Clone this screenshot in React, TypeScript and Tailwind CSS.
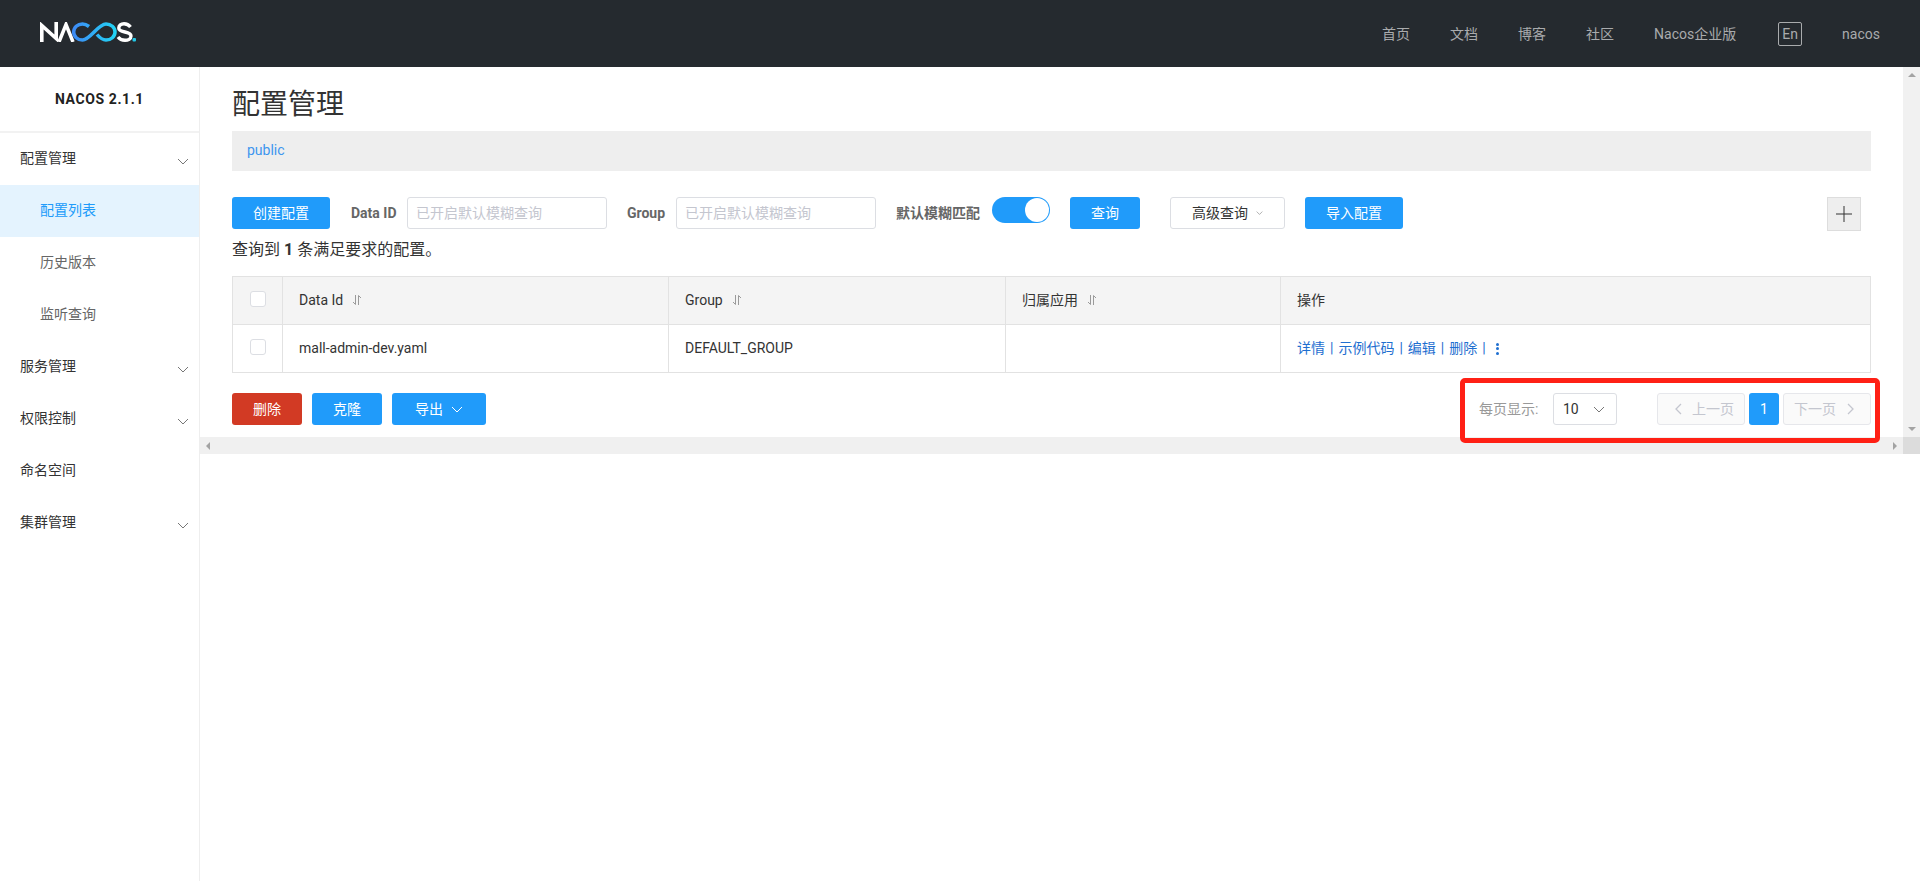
import React from 'react';

const sideMenu = [
  { label: '配置管理', arrow: true },
  { label: '配置列表', sub: true, active: true },
  { label: '历史版本', sub: true },
  { label: '监听查询', sub: true },
  { label: '服务管理', arrow: true },
  { label: '权限控制', arrow: true },
  { label: '命名空间' },
  { label: '集群管理', arrow: true },
];

const navLinks = ['首页', '文档', '博客', '社区'];

function Chevron({ className }: { className?: string }) {
  return (
    <svg viewBox="0 0 12 7" fill="none" stroke="currentColor" strokeWidth="1" className={className}>
      <path d="M1 1l5 5 5-5" />
    </svg>
  );
}

function PageArrow({ d }: { d: string }) {
  return (
    <svg viewBox="0 0 8 12" width="8" height="12" fill="none" stroke="#c4c6cf" strokeWidth="1.300">
      <path d={d} />
    </svg>
  );
}

function SortIcon() {
  return (
    <svg viewBox="0 0 8 10" fill="none" stroke="#9a9a9a" strokeWidth="1" className="ml-[10px] mt-[5px] h-[10px] w-[8px]">
      <path d="M2.500 0v9.500M0 7l2.500 2.500M5.500 10V0.500M5.500 0.500L8 3" />
    </svg>
  );
}

function Logo() {
  return (
    <svg viewBox="0 0 98 20" width="98" height="20" fill="none" className="mb-[3px]">
      <defs>
        <linearGradient id="inf" x1="0" x2="1" y1="0" y2="0">
          <stop offset="0" stopColor="#3d8bf5" />
          <stop offset="1" stopColor="#22d3f5" />
        </linearGradient>
      </defs>
      <path d="M3.800 20V3.500L18.200 16.500V0" stroke="#fff" strokeWidth="3.600" />
      <path d="M21 20L28 2.500 35 20" stroke="#fff" strokeWidth="3.500" />
      <path
        d="M51 4.500C49 3 47 2 44.500 2 39.500 2 35.700 5.500 35.700 10 35.700 14.500 39.500 18 44.500 18 52 18 60 2 68 2 73 2 77 5.500 77 10 77 14.500 73 18 68 18 64.500 18 61.500 15.500 59 12.500"
        stroke="url(#inf)"
        strokeWidth="3.500"
      />
      <path
        d="M92.500 5C91 3 88.500 1.700 86 1.700 83 1.700 80.800 3.500 80.800 6 80.800 11.500 93 8.500 93 14 93 16.800 90 18.300 87 18.300 84 18.300 81.500 17 80 15"
        stroke="#fff"
        strokeWidth="3.400"
      />
      <rect x="94.500" y="16" width="3.500" height="3.500" rx="1" fill="#22c8e8" />
    </svg>
  );
}

function BlueButton({ children, className }: { children: React.ReactNode; className?: string }) {
  return (
    <button className={`flex h-8 items-center justify-center rounded-[3px] bg-[#209bfa] text-sm text-white ${className ?? ''}`}>
      {children}
    </button>
  );
}

function Field({ placeholder }: { placeholder: string }) {
  return (
    <input
      readOnly
      placeholder={placeholder}
      className="h-8 w-[200px] rounded-[3px] border border-[#dcdee3] px-2 text-sm outline-none placeholder:text-[#c4c6cf]"
    />
  );
}

function Checkbox() {
  return <div className="mx-auto h-4 w-4 rounded-[3px] border border-[#dcdee3] bg-white" />;
}

function Sep() {
  return <span className="mx-[5px]">|</span>;
}

export default function App() {
  return (
    <div className="relative flex h-screen flex-col overflow-hidden bg-white font-['Roboto','Noto_Sans_CJK_SC',sans-serif] text-sm text-[#333]">
      <header className="flex h-[67px] shrink-0 items-center justify-between bg-[#252a2f] pl-[38px] pr-[40px] text-[#a9abad]">
        <Logo />
        <nav className="flex items-center gap-10">
          {navLinks.map((link) => (
            <a key={link}>{link}</a>
          ))}
          <a className="w-[84px]">Nacos企业版</a>
          <span className="flex h-6 w-6 items-center justify-center rounded-[2px] border border-[#a9abad]">En</span>
          <a>nacos</a>
        </nav>
      </header>

      <div className="flex min-h-0 flex-1">
        <aside className="w-[200px] shrink-0 border-r border-[#eee]">
          <div className="flex h-[66px] items-center justify-center border-b-2 border-[#f2f2f2] font-bold tracking-[0.6px] text-[#222]">
            NACOS 2.1.1
          </div>
          {sideMenu.map((item) => (
            <div
              key={item.label}
              className={`flex h-[52px] items-center justify-between pb-[2px] pr-[10px] ${item.sub ? 'pl-10' : 'pl-5'} ${
                item.active ? 'bg-[#e4f3fe] text-[#209bfa]' : item.sub ? 'text-[#666]' : ''
              }`}
            >
              <span>{item.label}</span>
              {item.arrow && <Chevron className="mt-[6px] h-[7px] w-[12px] text-[#777]" />}
            </div>
          ))}
        </aside>

        <main className="flex min-w-0 flex-1 flex-col">
          <div className="flex h-[370px]">
            <div className="min-w-0 flex-1 px-8">
              <h1 className="h-16 pt-5 text-[28px] leading-[36px] text-[#333]">配置管理</h1>
              <div className="flex h-10 items-center bg-[#eee] px-[15px] pb-[2px] text-[#3d96ee]">public</div>

              <div className="mt-[26px] flex items-start">
                <BlueButton className="w-[98px]">创建配置</BlueButton>
                <label className="ml-[21px] h-8 w-[56px] font-bold leading-8 text-[#666]">Data ID</label>
                <Field placeholder="已开启默认模糊查询" />
                <label className="ml-5 h-8 w-[49px] font-bold leading-8 text-[#666]">Group</label>
                <Field placeholder="已开启默认模糊查询" />
                <label className="ml-5 h-8 w-[96px] font-bold leading-8 text-[#666]">默认模糊匹配</label>
                <div className="flex h-[26px] w-[58px] items-center justify-end rounded-full bg-[#209bfa] pr-px">
                  <div className="h-6 w-6 rounded-full bg-white" />
                </div>
                <BlueButton className="ml-5 w-[70px]">查询</BlueButton>
                <button className="ml-[30px] flex h-8 w-[115px] items-center justify-center rounded-[3px] border border-[#dcdee3]">
                  高级查询
                  <Chevron className="ml-2 h-[4px] w-[7px] text-[#777]" />
                </button>
                <BlueButton className="ml-5 w-[98px]">导入配置</BlueButton>
                <button className="ml-auto mr-[10px] flex h-[34px] w-[34px] items-center justify-center border border-[#ddd] bg-[#eee]">
                  <svg viewBox="0 0 16 16" width="16" height="16" stroke="#333" strokeWidth="1">
                    <path d="M0 8h16M8 0v16" />
                  </svg>
                </button>
              </div>

              <h5 className="mb-[14px] pt-[7px] text-base leading-6">
                查询到 <strong className="font-bold">1</strong> 条满足要求的配置。
              </h5>

              <table className="w-[1638px] table-fixed border-collapse">
                <colgroup>
                  <col className="w-[50px]" />
                  <col className="w-[386px]" />
                  <col className="w-[337px]" />
                  <col className="w-[275px]" />
                  <col className="w-[590px]" />
                </colgroup>
                <thead>
                  <tr className="h-12 bg-[#f4f4f4] text-left font-normal">
                    <th className="border border-[#e2e2e2] pb-1">
                      <Checkbox />
                    </th>
                    <th className="border border-[#e2e2e2] px-4 pb-[2px] font-normal">
                      <span className="flex">Data Id<SortIcon /></span>
                    </th>
                    <th className="border border-[#e2e2e2] px-4 pb-[2px] font-normal">
                      <span className="flex">Group<SortIcon /></span>
                    </th>
                    <th className="border border-[#e2e2e2] px-4 pb-[2px] font-normal">
                      <span className="flex">归属应用<SortIcon /></span>
                    </th>
                    <th className="border border-[#e2e2e2] px-4 pb-[2px] font-normal">操作</th>
                  </tr>
                </thead>
                <tbody>
                  <tr className="h-12">
                    <td className="border border-[#e2e2e2] pb-1">
                      <Checkbox />
                    </td>
                    <td className="border border-[#e2e2e2] px-4 pb-[2px]">mall-admin-dev.yaml</td>
                    <td className="border border-[#e2e2e2] px-4 pb-[2px]">DEFAULT_GROUP</td>
                    <td className="border border-[#e2e2e2] px-4"></td>
                    <td className="border border-[#e2e2e2] px-4 pb-[2px] text-[#1f6fd0]">
                      <span className="flex items-center">
                        <a>详情</a>
                        <Sep />
                        <a>示例代码</a>
                        <Sep />
                        <a>编辑</a>
                        <Sep />
                        <a>删除</a>
                        <Sep />
                        <span className="ml-[5px] mt-[2px] flex flex-col gap-[1.5px]">
                          <i className="h-[3px] w-[3px] rounded-full bg-[#1f6fd0]" />
                          <i className="h-[3px] w-[3px] rounded-full bg-[#1f6fd0]" />
                          <i className="h-[3px] w-[3px] rounded-full bg-[#1f6fd0]" />
                        </span>
                      </span>
                    </td>
                  </tr>
                </tbody>
              </table>

              <div className="mt-5 flex w-[1639px] items-center justify-between">
                <div className="flex gap-[10px]">
                  <button className="flex h-8 w-[70px] items-center justify-center rounded-[3px] bg-[#d23a24] text-white">删除</button>
                  <BlueButton className="w-[70px]">克隆</BlueButton>
                  <BlueButton className="w-[94px]">
                    导出
                    <Chevron className="ml-2 h-[7px] w-[12px]" />
                  </BlueButton>
                </div>

                <div className="relative flex items-center">
                  <span className="w-[74px] text-[#999]">每页显示:</span>
                  <div className="flex h-8 w-16 items-center justify-between rounded-[3px] border border-[#dcdee3] pl-[9px] pr-[11px]">
                    <span>10</span>
                    <Chevron className="h-[7px] w-[12px] text-[#777]" />
                  </div>
                  <div className="ml-10 flex h-8 gap-1">
                    <button className="flex w-[88px] items-center gap-[10px] rounded-[3px] border border-[#e6e7eb] bg-[#fafafa] pl-4 text-[#c4c6cf]">
                      <PageArrow d="M7 1L2 6l5 5" />
                      上一页
                    </button>
                    <button className="w-[30px] rounded-[3px] bg-[#209bfa] text-white">1</button>
                    <button className="flex w-[88px] items-center gap-[11px] rounded-[3px] border border-[#e6e7eb] bg-[#fafafa] pl-[10px] text-[#c4c6cf]">
                      下一页
                      <PageArrow d="M1 1l5 5-5 5" />
                    </button>
                  </div>
                  <div className="pointer-events-none absolute -right-[9px] -top-[15px] h-[65px] w-[420px] rounded-[5px] border-[5px] border-[#ff2015]" />
                </div>
              </div>
            </div>

            <div className="flex w-[17px] shrink-0 flex-col items-center justify-between bg-[#f1f1f1] py-[6px]">
              <div className="h-0 w-0 border-x-[4px] border-b-[4px] border-x-transparent border-b-[#a3a3a3]" />
              <div className="h-0 w-0 border-x-[4px] border-t-[4px] border-x-transparent border-t-[#a3a3a3]" />
            </div>
          </div>

          <div className="flex h-[17px] items-center bg-[#f0f0f0]">
            <div className="flex flex-1 items-center justify-between px-[6px]">
              <div className="h-0 w-0 border-y-[4px] border-r-[4px] border-y-transparent border-r-[#a3a3a3]" />
              <div className="h-0 w-0 border-y-[4px] border-l-[4px] border-y-transparent border-l-[#a3a3a3]" />
            </div>
            <div className="h-[17px] w-[17px] bg-[#dcdcdc]" />
          </div>
        </main>
      </div>
    </div>
  );
}
